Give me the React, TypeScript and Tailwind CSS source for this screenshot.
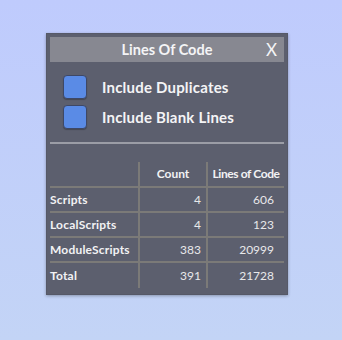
import React from "react";

const rows = [
  { name: "Scripts", count: "4", lines: "606" },
  { name: "LocalScripts", count: "4", lines: "123" },
  { name: "ModuleScripts", count: "383", lines: "20999" },
  { name: "Total", count: "391", lines: "21728" },
];

function Check({ label }: { label: string }) {
  return (
    <div className="flex items-center">
      <div className="w-[24px] h-[24px] rounded-[4px] bg-[#5a8be6] border border-[#3e4866] shadow-[0_1px_1px_rgba(0,0,0,0.25)]" />
      <span className="ml-[15px] text-[15px] font-bold text-[#f4f4f6] tracking-[0.2px]">{label}</span>
    </div>
  );
}

export default function App() {
  return (
    <div
      className="w-full h-[340px] pt-[33px] pl-[46px] bg-gradient-to-b from-[#bfcbfd] to-[#c3d4f6]"
      style={{ fontFamily: "Lato, 'Noto Sans', sans-serif" }}
    >
      <div className="w-[242px] h-[262px] bg-[#5c5f6e] border border-[#565968] p-[3px] shadow-[0_1px_3px_rgba(0,0,0,0.3)]">
        {/* Title bar */}
        <div className="relative h-[25px] bg-[#878891] flex items-center justify-center">
          <span className="text-[14.5px] font-bold text-[#f4f4f6]">Lines Of Code</span>
          <span className="absolute right-[7px] top-0 h-full flex items-center text-[17px] font-normal text-[#f4f4f6]">X</span>
        </div>

        {/* Options */}
        <div className="mt-[13px] ml-[13px] flex flex-col gap-[6px]">
          <Check label="Include Duplicates" />
          <Check label="Include Blank Lines" />
        </div>

        <div className="mt-[13px] h-[2px] bg-[#9b9da6]" />

        {/* Table */}
        <div className="mt-[18px] grid grid-cols-[90px_68px_76px] text-[12px] text-[#f2f2f4]">
          <div className="h-[26px] border-r-2 border-b-2 border-[#7b7a78]" />
          <div className="h-[26px] border-r-2 border-b-2 border-[#7b7a78] flex items-center justify-center font-bold">Count</div>
          <div className="h-[26px] border-b-2 border-[#7b7a78] flex items-center justify-center font-bold whitespace-nowrap tracking-[-0.4px]">Lines of Code</div>
          {rows.map((r, i) => {
            const last = i === rows.length - 1;
            const b = last ? "" : "border-b-2";
            return (
              <React.Fragment key={r.name}>
                <div className={`h-[25px] border-r-2 ${b} border-[#7b7a78] flex items-center font-bold tracking-[0.2px]`}>{r.name}</div>
                <div className={`h-[25px] border-r-2 ${b} border-[#7b7a78] flex items-center justify-end pr-[5px] text-[#e8e8ea]`}>{r.count}</div>
                <div className={`h-[25px] ${b} border-[#7b7a78] flex items-center justify-end pr-[10px] text-[#e8e8ea]`}>{r.lines}</div>
              </React.Fragment>
            );
          })}
        </div>
      </div>
    </div>
  );
}
